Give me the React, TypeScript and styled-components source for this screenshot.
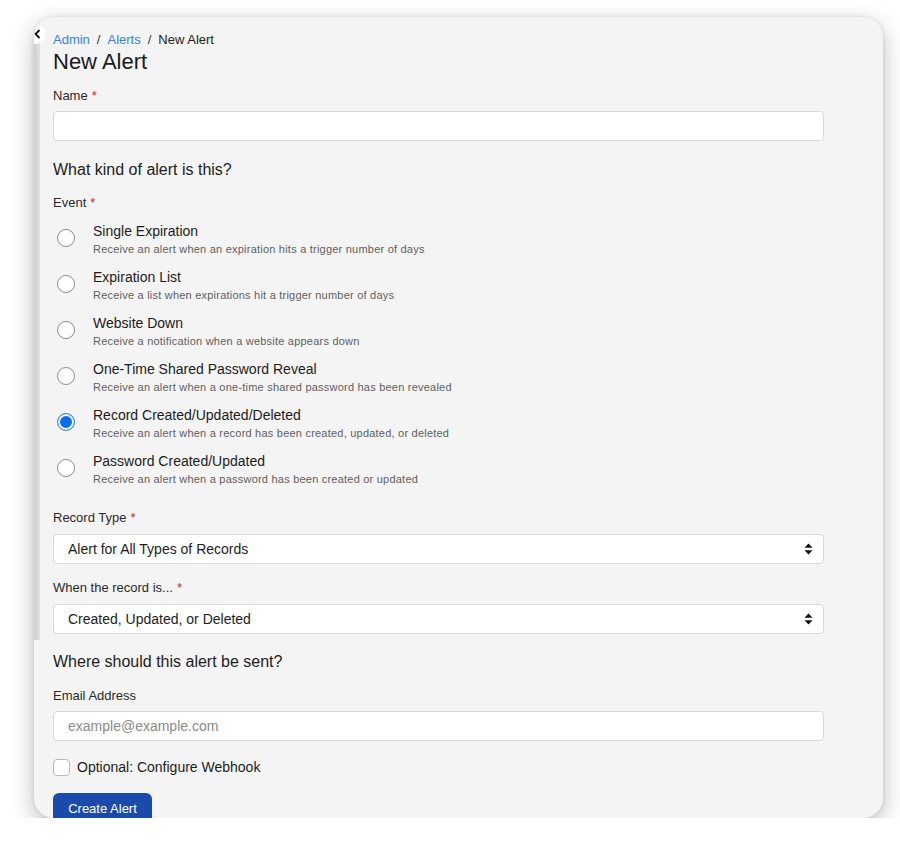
import React from "react";
import styled, { createGlobalStyle } from "styled-components";

const GlobalStyle = createGlobalStyle`
  html, body {
    margin: 0;
    padding: 0;
    background: #ffffff;
  }
  body {
    font-family: "Liberation Sans", Arial, sans-serif;
    color: #222;
  }
  * {
    box-sizing: border-box;
  }
`;

const Window = styled.div`
  position: relative;
  margin: 17px 0 0 34px;
  width: 849px;
  height: 801px;
  border-radius: 20px;
  overflow: hidden;
  background: #f4f4f4;
  box-shadow: 0 8px 24px rgba(0, 0, 0, 0.26), 0 0 5px rgba(0, 0, 0, 0.1);
  display: flex;
  align-items: flex-start;
`;

const Rail = styled.div`
  flex: 0 0 6px;
  height: 623px;
  background: linear-gradient(to right, #cfcfcf, #e2e2e2);
`;

const Toggle = styled.button`
  position: absolute;
  left: -8px;
  top: 7px;
  width: 20px;
  height: 20px;
  border-radius: 50%;
  border: none;
  padding: 0;
  background: #ffffff;
  display: flex;
  align-items: center;
  justify-content: flex-end;
  padding-right: 5px;
  cursor: pointer;
`;

const Main = styled.main`
  flex: 1;
  padding: 14px 59px 0 13px;
  display: flex;
  flex-direction: column;
`;

const Crumbs = styled.nav`
  font-size: 13px;
  line-height: 18px;
  color: #222;
  display: flex;
  gap: 7px;
`;

const CrumbLink = styled.a`
  color: #3a7ee0;
  text-decoration: none;
`;

const Slash = styled.span`
  color: #333;
`;

const Title = styled.h1`
  margin: 0;
  font-size: 22px;
  line-height: 26px;
  font-weight: 400;
  color: #1a1a1a;
`;

const Label = styled.label<{ $top: number }>`
  display: block;
  margin-top: ${(p) => p.$top}px;
  font-size: 13px;
  line-height: 18px;
  color: #2a2a2a;
`;

const Req = styled.span`
  color: #e0201b;
  margin-left: 4px;
`;

const Section = styled.h2<{ $top: number }>`
  margin: ${(p) => p.$top}px 0 0;
  font-size: 16px;
  line-height: 22px;
  font-weight: 500;
  color: #1c1c1c;
`;

const TextInput = styled.input`
  display: block;
  margin-top: 6px;
  width: 100%;
  height: 30px;
  border: 1px solid #d9d9d9;
  border-radius: 4px;
  background: #fff;
  padding: 0 14px;
  font-family: inherit;
  font-size: 14px;
  color: #222;
  outline: none;
  &::placeholder {
    color: #8a8a8a;
  }
`;

const SelectBox = styled.div`
  margin-top: 7px;
  height: 30px;
  border: 1px solid #d9d9d9;
  border-radius: 4px;
  background: #fff;
  padding: 0 10px 0 14px;
  display: flex;
  align-items: center;
  justify-content: space-between;
  font-size: 14px;
  color: #1c1c1c;
`;

const Options = styled.div`
  margin-top: 10px;
  display: flex;
  flex-direction: column;
  gap: 11px;
`;

const Option = styled.div`
  display: flex;
  align-items: flex-start;
  gap: 18px;
  padding-left: 4px;
`;

const Radio = styled.span<{ $on?: boolean }>`
  flex: 0 0 18px;
  height: 18px;
  margin-top: 7px;
  border-radius: 50%;
  background: ${(p) => (p.$on ? "#0a6cf2" : "#fff")};
  border: 1px solid ${(p) => (p.$on ? "#3d8af7" : "#8c8c8c")};
  box-shadow: ${(p) => (p.$on ? "inset 0 0 0 2px #fff" : "none")};
`;

const OptText = styled.div`
  display: flex;
  flex-direction: column;
`;

const OptTitle = styled.div`
  font-size: 14px;
  line-height: 18px;
  color: #1c1c1c;
`;

const OptDesc = styled.div`
  margin-top: 1px;
  font-size: 11px;
  line-height: 16px;
  letter-spacing: 0.22px;
  color: #5f5f5f;
`;

const CheckRow = styled.label`
  margin-top: 16px;
  display: flex;
  align-items: center;
  gap: 7px;
  font-size: 14px;
  line-height: 20px;
  color: #1c1c1c;
`;

const CheckBox = styled.span`
  width: 17px;
  height: 17px;
  border: 1px solid #b9b9b9;
  border-radius: 4px;
  background: #fff;
`;

const Button = styled.button`
  margin-top: 16px;
  align-self: flex-start;
  width: 99px;
  height: 30px;
  border: none;
  border-radius: 6px;
  background: #1b4aad;
  color: #fff;
  font-family: inherit;
  font-size: 13px;
`;

const Updown = () => (
  <svg width="9" height="12" viewBox="0 0 9 12">
    <path d="M4.5 0.5 L8.5 4.8 H0.5 Z" fill="#111" />
    <path d="M4.5 11.5 L8.5 7.2 H0.5 Z" fill="#111" />
  </svg>
);

const events = [
  ["Single Expiration", "Receive an alert when an expiration hits a trigger number of days"],
  ["Expiration List", "Receive a list when expirations hit a trigger number of days"],
  ["Website Down", "Receive a notification when a website appears down"],
  ["One-Time Shared Password Reveal", "Receive an alert when a one-time shared password has been revealed"],
  ["Record Created/Updated/Deleted", "Receive an alert when a record has been created, updated, or deleted"],
  ["Password Created/Updated", "Receive an alert when a password has been created or updated"],
];

export default function App() {
  return (
    <>
      <GlobalStyle />
      <Window>
        <Rail />
        <Toggle aria-label="Collapse">
          <svg width="7" height="10" viewBox="0 0 7 10">
            <path d="M5.5 1 L1.5 5 L5.5 9" fill="none" stroke="#111" strokeWidth="1.8" />
          </svg>
        </Toggle>
        <Main>
          <Crumbs>
            <CrumbLink href="#">Admin</CrumbLink>
            <Slash>/</Slash>
            <CrumbLink href="#">Alerts</CrumbLink>
            <Slash>/</Slash>
            <span>New Alert</span>
          </Crumbs>
          <Title>New Alert</Title>

          <Label $top={12}>
            Name<Req>*</Req>
          </Label>
          <TextInput />

          <Section $top={18}>What kind of alert is this?</Section>
          <Label $top={13}>
            Event<Req>*</Req>
          </Label>
          <Options>
            {events.map(([t, d], i) => (
              <Option key={t}>
                <Radio $on={i === 4} />
                <OptText>
                  <OptTitle>{t}</OptTitle>
                  <OptDesc>{d}</OptDesc>
                </OptText>
              </Option>
            ))}
          </Options>

          <Label $top={22}>
            Record Type<Req>*</Req>
          </Label>
          <SelectBox>
            <span>Alert for All Types of Records</span>
            <Updown />
          </SelectBox>

          <Label $top={15}>
            When the record is...<Req>*</Req>
          </Label>
          <SelectBox>
            <span>Created, Updated, or Deleted</span>
            <Updown />
          </SelectBox>

          <Section $top={17}>Where should this alert be sent?</Section>
          <Label $top={14}>Email Address</Label>
          <TextInput placeholder="example@example.com" />

          <CheckRow>
            <CheckBox />
            Optional: Configure Webhook
          </CheckRow>

          <Button>Create Alert</Button>
        </Main>
      </Window>
    </>
  );
}
